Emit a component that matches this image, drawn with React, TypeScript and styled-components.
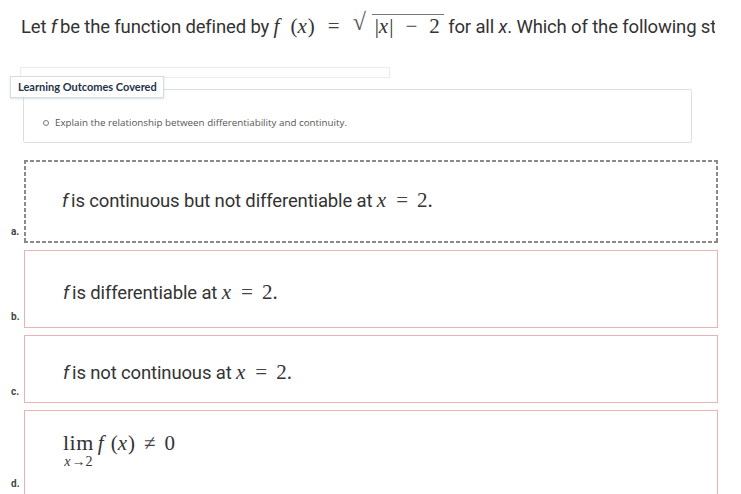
import styled, { createGlobalStyle } from "styled-components";

const GlobalStyle = createGlobalStyle`
  html, body {
    margin: 0;
    padding: 0;
    background: #ffffff;
  }
  body {
    font-family: Roboto, "Liberation Sans", sans-serif;
    color: #333333;
  }
`;

const Page = styled.div`
  width: 741px;
  height: 494px;
  overflow: hidden;
`;

const Title = styled.div`
  box-sizing: border-box;
  width: 715px;
  padding: 14px 0 0 21px;
  font-size: 18.5px;
  line-height: 24px;
  white-space: nowrap;
  overflow: hidden;
  color: #333333;
  letter-spacing: -0.15px;
`;

const It = styled.i`
  font-style: italic;
  margin-right: 3px;
`;

const MathSpan = styled.span`
  font-family: "Liberation Serif", "DejaVu Serif", serif;
  font-size: 21px;
  color: #333333;
  letter-spacing: 0;
`;

const MathVar = styled.span`
  font-style: italic;
  margin-right: 1px;
`;

const Gap = styled.span<{ $w?: number }>`
  display: inline-block;
  width: ${(p) => p.$w ?? 6}px;
`;

const Op = styled.span<{ $space?: number }>`
  margin: 0 ${(p) => p.$space ?? 9}px;
  color: #444;
`;

const Radical = styled.span`
  display: inline-block;
  position: relative;
  padding-left: 19px;
`;

const RadicalSign = styled.span`
  position: absolute;
  left: 0;
  top: -4px;
  font-size: 24px;
  line-height: 1;
  color: #555;
`;

const Radicand = styled.span`
  display: inline-block;
  border-top: 1px solid #777;
  padding: 1px 4px 0 3px;
  line-height: 20px;
`;

const FaintBar = styled.div`
  margin: 28px 0 0 20px;
  width: 368px;
  height: 9px;
  border: 1px solid #ececec;
`;

const Outcomes = styled.div`
  margin-top: -2px;
`;

const OutcomesTab = styled.div`
  position: relative;
  z-index: 1;
  display: inline-block;
  box-sizing: border-box;
  margin-left: 10px;
  height: 22px;
  padding: 0 6px 0 7px;
  border: 1px solid #d6dce6;
  box-shadow: 0 1px 2px rgba(60, 80, 110, 0.18);
  background: #ffffff;
  font-family: Lato, "Open Sans", sans-serif;
  font-weight: 700;
  font-size: 11px;
  line-height: 20px;
  color: #253247;
`;

const OutcomesPanel = styled.div`
  box-sizing: border-box;
  margin: -9px 0 0 23px;
  width: 669px;
  height: 54px;
  border: 1px solid #dedede;
  border-radius: 2px;
  padding: 27px 0 0 19px;
`;

const OutcomeList = styled.ul`
  margin: 0;
  padding: 0;
  list-style: none;
`;

const OutcomeItem = styled.li`
  display: flex;
  align-items: center;
  gap: 6px;
  font-family: "Open Sans", sans-serif;
  font-size: 9.8px;
  line-height: 12px;
  color: #555555;
`;

const Bullet = styled.span`
  width: 4px;
  height: 4px;
  border: 1px solid #777;
  border-radius: 50%;
`;

const Options = styled.div`
  margin-top: 17px;
  display: flex;
  flex-direction: column;
  gap: 7px;
`;

const OptionRow = styled.div`
  display: flex;
  align-items: flex-end;
`;

const Letter = styled.span`
  width: 24px;
  box-sizing: border-box;
  padding: 0 0 5px 11px;
  font-size: 10px;
  font-weight: 700;
  line-height: 12px;
  color: #444444;
`;

const dashH = "repeating-linear-gradient(90deg, #8a8a8a 0 4px, transparent 4px 6px)";
const dashV = "repeating-linear-gradient(180deg, #8a8a8a 0 4px, transparent 4px 6px)";

const OptionBox = styled.div<{ $selected?: boolean; $h: number; $top: number }>`
  box-sizing: border-box;
  width: 694px;
  height: ${(p) => p.$h}px;
  padding: ${(p) => p.$top}px 0 0 38px;
  border: ${(p) => (p.$selected ? "none" : "1px solid #eab2b2")};
  background: ${(p) =>
    p.$selected
      ? `${dashH} top left / 100% 2px no-repeat, ${dashH} bottom left / 100% 2px no-repeat,
         ${dashV} top left / 2px 100% no-repeat, ${dashV} top right / 2px 100% no-repeat`
      : "#ffffff"};
  font-size: 18.5px;
  line-height: 24px;
  color: #333333;
  letter-spacing: -0.15px;
`;

const Lim = styled.span`
  display: inline-flex;
  flex-direction: column;
  align-items: center;
  vertical-align: top;
  margin-right: 4px;
`;

const LimWord = styled.span`
  font-size: 22px;
  line-height: 24px;
  letter-spacing: 0.5px;
`;

const LimSub = styled.span`
  font-size: 14px;
  line-height: 14px;
  white-space: nowrap;
`;

function EqualsTwo() {
  return (
    <MathSpan>
      <MathVar>x</MathVar>
      <Op>=</Op>2.
    </MathSpan>
  );
}

export default function App() {
  return (
    <Page>
      <GlobalStyle />
      <Title>
        Let <It>f</It>be the function defined by{" "}
        <MathSpan>
          <MathVar>f</MathVar>
          <Gap $w={10} />(<MathVar>x</MathVar>)<Op $space={13}>=</Op>
          <Radical>
            <RadicalSign>√</RadicalSign>
            <Radicand>
              |<MathVar>x</MathVar>|<Op $space={12}>−</Op>2
            </Radicand>
          </Radical>
        </MathSpan>{" "}
        for all <i>x</i>. Which of the following statements is true?
      </Title>
      <FaintBar />
      <Outcomes>
        <OutcomesTab>Learning Outcomes Covered</OutcomesTab>
        <OutcomesPanel>
          <OutcomeList>
            <OutcomeItem>
              <Bullet />
              Explain the relationship between differentiability and continuity.
            </OutcomeItem>
          </OutcomeList>
        </OutcomesPanel>
      </Outcomes>
      <Options>
        <OptionRow>
          <Letter>a.</Letter>
          <OptionBox $selected $h={83} $top={28}>
            <It>f</It>is continuous but not differentiable at <EqualsTwo />
          </OptionBox>
        </OptionRow>
        <OptionRow>
          <Letter>b.</Letter>
          <OptionBox $h={78} $top={29}>
            <It>f</It>is differentiable at <EqualsTwo />
          </OptionBox>
        </OptionRow>
        <OptionRow>
          <Letter>c.</Letter>
          <OptionBox $h={68} $top={24}>
            <It>f</It>is not continuous at <EqualsTwo />
          </OptionBox>
        </OptionRow>
        <OptionRow>
          <Letter>d.</Letter>
          <OptionBox $h={85} $top={20}>
            <MathSpan>
              <Lim>
                <LimWord>lim</LimWord>
                <LimSub>
                  <MathVar>x</MathVar>→2
                </LimSub>
              </Lim>
              <MathVar>f</MathVar>
              <Gap />(<MathVar>x</MathVar>)<Op>≠</Op>0
            </MathSpan>
          </OptionBox>
        </OptionRow>
      </Options>
    </Page>
  );
}
